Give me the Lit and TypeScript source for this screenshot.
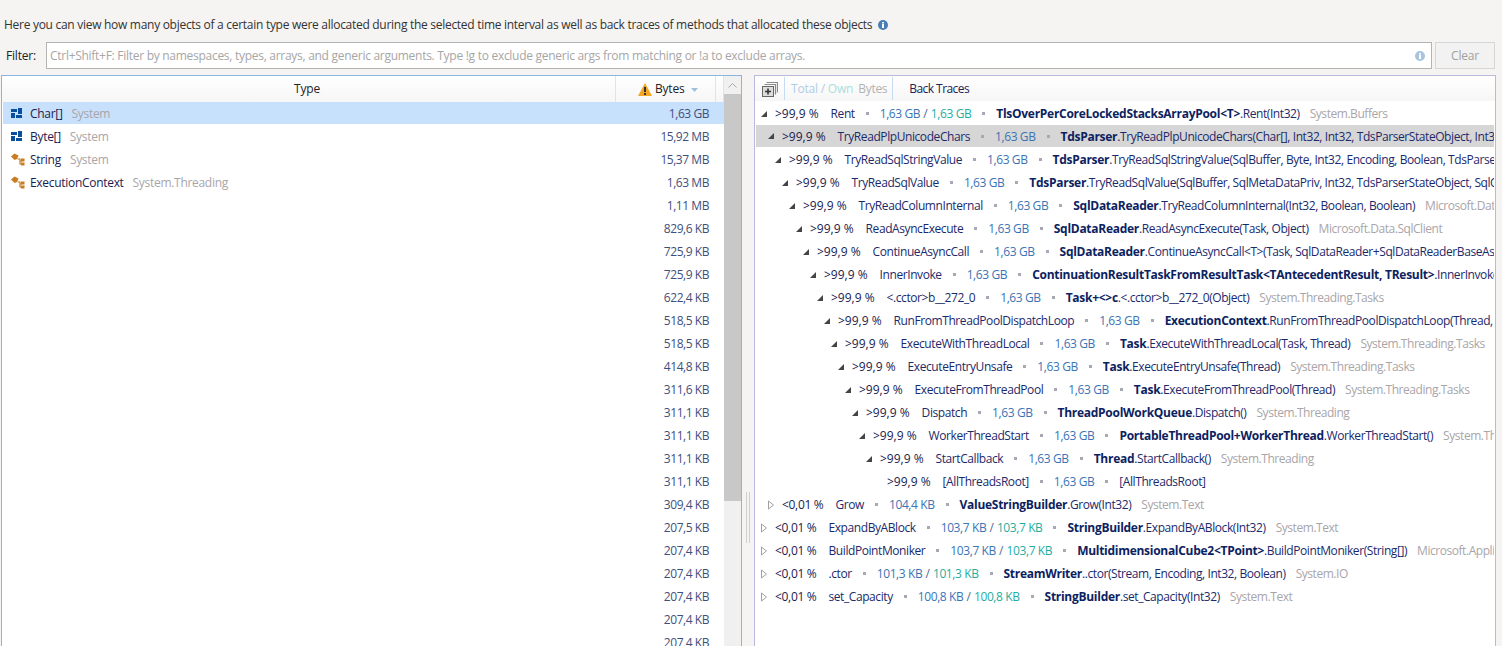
import { LitElement, html, css, svg } from "lit";
import { customElement } from "lit/decorators.js";

type Row = { lvl: number; pct: string; name: string; total: string; own?: string; bold: string; rest: string; ns?: string; open?: boolean; leaf?: boolean; sel?: boolean };

const T: Row[] = [
  { lvl: 0, pct: ">99,9 %", name: "Rent", total: "1,63 GB", own: "1,63 GB", bold: "TlsOverPerCoreLockedStacksArrayPool<T>", rest: ".Rent(Int32)", ns: "System.Buffers", open: true },
  { lvl: 1, pct: ">99,9 %", name: "TryReadPlpUnicodeChars", total: "1,63 GB", bold: "TdsParser", rest: ".TryReadPlpUnicodeChars(Char[], Int32, Int32, TdsParserStateObject, Int32, Boolean)", open: true, sel: true },
  { lvl: 2, pct: ">99,9 %", name: "TryReadSqlStringValue", total: "1,63 GB", bold: "TdsParser", rest: ".TryReadSqlStringValue(SqlBuffer, Byte, Int32, Encoding, Boolean, TdsParserStateObject)", open: true },
  { lvl: 3, pct: ">99,9 %", name: "TryReadSqlValue", total: "1,63 GB", bold: "TdsParser", rest: ".TryReadSqlValue(SqlBuffer, SqlMetaDataPriv, Int32, TdsParserStateObject, SqlCommand)", open: true },
  { lvl: 4, pct: ">99,9 %", name: "TryReadColumnInternal", total: "1,63 GB", bold: "SqlDataReader", rest: ".TryReadColumnInternal(Int32, Boolean, Boolean)", ns: "Microsoft.Data.SqlClient", open: true },
  { lvl: 5, pct: ">99,9 %", name: "ReadAsyncExecute", total: "1,63 GB", bold: "SqlDataReader", rest: ".ReadAsyncExecute(Task, Object)", ns: "Microsoft.Data.SqlClient", open: true },
  { lvl: 6, pct: ">99,9 %", name: "ContinueAsyncCall", total: "1,63 GB", bold: "SqlDataReader", rest: ".ContinueAsyncCall<T>(Task, SqlDataReader+SqlDataReaderBaseAsyncCallContext)", open: true },
  { lvl: 7, pct: ">99,9 %", name: "InnerInvoke", total: "1,63 GB", bold: "ContinuationResultTaskFromResultTask<TAntecedentResult, TResult>", rest: ".InnerInvoke()", ns: "System.Threading.Tasks", open: true },
  { lvl: 8, pct: ">99,9 %", name: "<.cctor>b__272_0", total: "1,63 GB", bold: "Task+<>c", rest: ".<.cctor>b__272_0(Object)", ns: "System.Threading.Tasks", open: true },
  { lvl: 9, pct: ">99,9 %", name: "RunFromThreadPoolDispatchLoop", total: "1,63 GB", bold: "ExecutionContext", rest: ".RunFromThreadPoolDispatchLoop(Thread, ExecutionContext)", open: true },
  { lvl: 10, pct: ">99,9 %", name: "ExecuteWithThreadLocal", total: "1,63 GB", bold: "Task", rest: ".ExecuteWithThreadLocal(Task, Thread)", ns: "System.Threading.Tasks", open: true },
  { lvl: 11, pct: ">99,9 %", name: "ExecuteEntryUnsafe", total: "1,63 GB", bold: "Task", rest: ".ExecuteEntryUnsafe(Thread)", ns: "System.Threading.Tasks", open: true },
  { lvl: 12, pct: ">99,9 %", name: "ExecuteFromThreadPool", total: "1,63 GB", bold: "Task", rest: ".ExecuteFromThreadPool(Thread)", ns: "System.Threading.Tasks", open: true },
  { lvl: 13, pct: ">99,9 %", name: "Dispatch", total: "1,63 GB", bold: "ThreadPoolWorkQueue", rest: ".Dispatch()", ns: "System.Threading", open: true },
  { lvl: 14, pct: ">99,9 %", name: "WorkerThreadStart", total: "1,63 GB", bold: "PortableThreadPool+WorkerThread", rest: ".WorkerThreadStart()", ns: "System.Threading", open: true },
  { lvl: 15, pct: ">99,9 %", name: "StartCallback", total: "1,63 GB", bold: "Thread", rest: ".StartCallback()", ns: "System.Threading", open: true },
  { lvl: 16, pct: ">99,9 %", name: "[AllThreadsRoot]", total: "1,63 GB", bold: "", rest: "[AllThreadsRoot]", leaf: true },
  { lvl: 1, pct: "<0,01 %", name: "Grow", total: "104,4 KB", bold: "ValueStringBuilder", rest: ".Grow(Int32)", ns: "System.Text" },
  { lvl: 0, pct: "<0,01 %", name: "ExpandByABlock", total: "103,7 KB", own: "103,7 KB", bold: "StringBuilder", rest: ".ExpandByABlock(Int32)", ns: "System.Text" },
  { lvl: 0, pct: "<0,01 %", name: "BuildPointMoniker", total: "103,7 KB", own: "103,7 KB", bold: "MultidimensionalCube2<TPoint>", rest: ".BuildPointMoniker(String[])", ns: "Microsoft.ApplicationInsights" },
  { lvl: 0, pct: "<0,01 %", name: ".ctor", total: "101,3 KB", own: "101,3 KB", bold: "StreamWriter", rest: "..ctor(Stream, Encoding, Int32, Boolean)", ns: "System.IO" },
  { lvl: 0, pct: "<0,01 %", name: "set_Capacity", total: "100,8 KB", own: "100,8 KB", bold: "StringBuilder", rest: ".set_Capacity(Int32)", ns: "System.Text" },
];

const L: [string, string, string][] = [
  ["Char[]", "System", "1,63 GB"], ["Byte[]", "System", "15,92 MB"], ["String", "System", "15,37 MB"], ["ExecutionContext", "System.Threading", "1,63 MB"],
  ...["1,11 MB", "829,6 KB", "725,9 KB", "725,9 KB", "622,4 KB", "518,5 KB", "518,5 KB", "414,8 KB", "311,6 KB", "311,1 KB", "311,1 KB", "311,1 KB", "311,1 KB", "309,4 KB", "207,5 KB", "207,4 KB", "207,4 KB", "207,4 KB", "207,4 KB", "207,4 KB"].map((s) => ["", "", s] as [string, string, string]),
];

const arrayIcon = svg`<svg width="12" height="11" viewBox="0 0 12 11"><path fill="#0a4f9e" d="M0 1h6v3H0zM7 0h4v6H7zM0 5h4v5H0zM5 7h6v3H5z"/></svg>`;
const classIcon = svg`<svg width="14" height="13" viewBox="0 0 14 13"><path fill="#c77d20" d="M0 3.500L3.500.5 7.500 2.500 6 6 3.500 7z"/><path fill="none" stroke="#c77d20" stroke-width="1.200" d="M6.500 6H9v5h2M9 8h2"/><rect x="10" y="5.500" width="3.500" height="3" fill="#c77d20"/><rect x="10" y="9.500" width="3.500" height="3" fill="#c77d20"/></svg>`;
const info = (c: string) => svg`<svg width="10" height="10" viewBox="0 0 10 10"><circle cx="5" cy="5" r="5" fill="${c}"/><rect x="4" y="4" width="2" height="4" fill="#fff"/><rect x="4" y="2" width="2" height="1.500" fill="#fff"/></svg>`;

@customElement("app-root")
export class AppRoot extends LitElement {
  static styles = css`
    :host { display: block; width: 1502px; height: 646px; overflow: hidden; background: #f5f4f2;
      font-family: "Open Sans", "Noto Sans", sans-serif; font-size: 12px; color: #1b1b4f; letter-spacing: -0.2px; }
    .desc { height: 42px; box-sizing: border-box; padding: 16px 0 0 4px; display: flex; align-items: flex-start; gap: 6px; color: #333; line-height: 17px; white-space: nowrap; letter-spacing: -0.285px; }
    .desc svg { margin-top: 4px; }
    .filter { display: flex; height: 27px; align-items: stretch; padding-right: 7px; }
    .filter label { width: 46px; box-sizing: border-box; padding-left: 6px; line-height: 27px; color: #222; }
    .input { width: 1386px; box-sizing: border-box; border: 1px solid #b3b3b3; background: #fff; display: flex; align-items: center; justify-content: space-between; padding: 0 6px 0 3px; color: #a6a6a6; letter-spacing: -0.28px; }
    .clear { margin-left: 3px; width: 60px; box-sizing: border-box; border: 1px solid #d6d6d6; background: #f2f2f2; color: #a0a0a0; display: flex; align-items: center; justify-content: center; }
    .main { display: grid; grid-template-columns: 741px 12px 742px; margin: 6px 0 0 1px; height: 571px; }
    .panel { box-sizing: border-box; border: 1px solid #8cb4e0; border-bottom: 0; background: #fff; overflow: hidden; height: 580px; }
    .panel.right { border-color: #b9b9dc; }
    .left { display: grid; grid-template-columns: 1fr 17px; }
    .lhead { display: grid; grid-template-columns: 613px 100px 8px; height: 26px; padding-left: 1px; background: linear-gradient(#fff, #f6f6f6); color: #222; line-height: 26px; }
    .lhead > div { box-sizing: border-box; border-right: 1px solid #e3e3e3; }
    .lhead .ty { text-align: center; padding-right: 4px; }
    .lhead .by { display: flex; align-items: center; gap: 3px; padding-left: 22px; }
    .lhead .by .s { margin-left: 3px; margin-top: 1px; }
    .lrow { height: 23px; display: flex; align-items: center; padding: 0 15px 0 1px; white-space: nowrap; letter-spacing: -0.3px; }
    .lrow.sel { background: #c7e0fb; height: 22px; margin-bottom: 1px; margin-left: 1px; padding-left: 0; }
    .ic { width: 27px; padding-left: 8px; box-sizing: border-box; display: flex; }
    .lrow .ns { margin-left: 9px; color: #a9a5a9; letter-spacing: -0.3px; }
    .lrow .sz { margin-left: auto; color: #3f4f7c; letter-spacing: -0.45px; }
    .sb { background: #f0f0f0; display: flex; flex-direction: column; }
    .sb .up { height: 18px; display: flex; justify-content: center; align-items: center; }
    .sb .th { height: 407px; background: #c8c8c8; }
    .split { display: flex; justify-content: center; align-items: flex-start; gap: 2px; padding-top: 417px; }
    .split i { width: 1px; height: 51px; background: #cfcfcf; }
    .rhead { height: 25px; display: flex; align-items: center; background: linear-gradient(#fff, #f6f6f6); padding-left: 7px; white-space: nowrap; }
    .rhead .stack { margin-right: 6px; }
    .rhead .sep { width: 1px; height: 23px; background: #c5dcf2; }
    .rhead .tot { color: #b0cde6; margin-left: 6px; }
    .rhead .tot b { font-weight: 400; color: #a9e0dc; }
    .rhead .by { color: #b3b3b3; margin-left: 5px; margin-right: 5px; letter-spacing: -0.3px; }
    .rhead .bt { color: #222255; margin-left: 16px; letter-spacing: -0.55px; }
    .tree { padding: 1px 1px 0 1px; }
    .tr { height: 23px; display: flex; align-items: center; white-space: nowrap; overflow: hidden; gap: 12px; letter-spacing: -0.42px; }
    .tr.sel { background: #d6d6d6; height: 22px; margin-bottom: 1px; }
    .tw { width: 9px; display: flex; justify-content: center; flex: none; margin-right: -5px; }
    .pct { color: #1b1b4f; letter-spacing: 0; }
    .pct.lt { letter-spacing: -0.3px; }
    .size { color: #3b74b5; letter-spacing: -0.4px; font-weight: 500; }
    .size .sl { color: #4f6a9a; letter-spacing: 0; }
    .size .own { color: #1fae9f; }
    .dot { width: 3px; height: 3px; background: #a8a8b4; flex: none; margin: 0 -1px; }
    .m b { color: #0c2260; font-weight: 700; letter-spacing: -0.28px; }
    .ns2 { color: #a9a5a9; letter-spacing: -0.45px; margin-left: -2px; }
    .m { color: #1b2a6b; }
  `;

  private tw(r: Row) {
    if (r.leaf) return html`<span class="tw"></span>`;
    return html`<span class="tw">${r.open
      ? svg`<svg width="8" height="8" viewBox="0 0 8 8"><path d="M7 1v6H1z" fill="#444"/></svg>`
      : svg`<svg width="8" height="10" viewBox="0 0 8 10"><path d="M1.500 1l5 4-5 4z" fill="#fff" stroke="#a0a0a0"/></svg>`}</span>`;
  }

  render() {
    return html`
      <div class="desc"><span>Here you can view how many objects of a certain type were allocated during the selected time interval as well as back traces of methods that allocated these objects</span>${info("#4a7fb5")}</div>
      <div class="filter">
        <label>Filter:</label>
        <div class="input"><span>Ctrl+Shift+F: Filter by namespaces, types, arrays, and generic arguments. Type !g to exclude generic args from matching or !a to exclude arrays.</span>${info("#a9c4de")}</div>
        <div class="clear">Clear</div>
      </div>
      <div class="main">
        <div class="panel left">
          <div>
            <div class="lhead">
              <div class="ty">Type</div>
              <div class="by">
                <svg width="14" height="13" viewBox="0 0 14 13"><path d="M7 0l7 13H0z" fill="#f5a623"/><rect x="6" y="4" width="2" height="5" fill="#333"/><rect x="6" y="10" width="2" height="2" fill="#333"/></svg>
                <span>Bytes</span>
                <svg class="s" width="7" height="4" viewBox="0 0 7 4"><path d="M0 0h7L3.500 4z" fill="#9cc0de"/></svg>
              </div>
              <div></div>
            </div>
            ${L.map(([n, ns, s], i) => html`<div class="lrow ${i === 0 ? "sel" : ""}">
              ${n ? html`<span class="ic">${i < 2 ? arrayIcon : classIcon}</span><span>${n}</span><span class="ns">${ns}</span>` : ""}
              <span class="sz">${s}</span></div>`)}
          </div>
          <div class="sb">
            <div class="up"><svg width="9" height="5" viewBox="0 0 9 5"><path d="M.5 4.500l4-4 4 4" fill="none" stroke="#a8a8a8"/></svg></div>
            <div class="th"></div>
          </div>
        </div>
        <div class="split"><i></i><i></i></div>
        <div class="panel right">
          <div class="rhead">
            <svg class="stack" width="16" height="16" viewBox="0 0 16 16"><path fill="none" stroke="#8a8a8a" stroke-width="1.200" d="M4.500 1.500h11v10M2.500 3.500h11v10"/><rect x="0.500" y="5.500" width="11" height="10" fill="#ddd" stroke="#666"/><path d="M6 7.500v6M3 10.500h6" stroke="#333" stroke-width="1.600"/></svg>
            <span class="sep"></span>
            <span class="tot">Total / <b>Own</b></span><span class="by">Bytes</span>
            <span class="sep"></span>
            <span class="bt">Back Traces</span>
          </div>
          <div class="tree">
            ${T.map((r) => html`<div class="tr ${r.sel ? "sel" : ""}" style="padding-left:${3 + r.lvl * 7}px">
              ${this.tw(r)}
              <span class="pct ${r.pct.startsWith("<") ? "lt" : ""}">${r.pct}</span>
              <span class="m">${r.name}</span>
              <i class="dot"></i>
              <span class="size">${r.total}${r.own ? html`<span class="sl"> / </span><span class="own">${r.own}</span>` : ""}</span>
              <i class="dot"></i>
              <span class="m"><b>${r.bold}</b>${r.rest}</span>
              ${r.ns ? html`<span class="ns2">${r.ns}</span>` : ""}
            </div>`)}
          </div>
        </div>
      </div>
    `;
  }
}
